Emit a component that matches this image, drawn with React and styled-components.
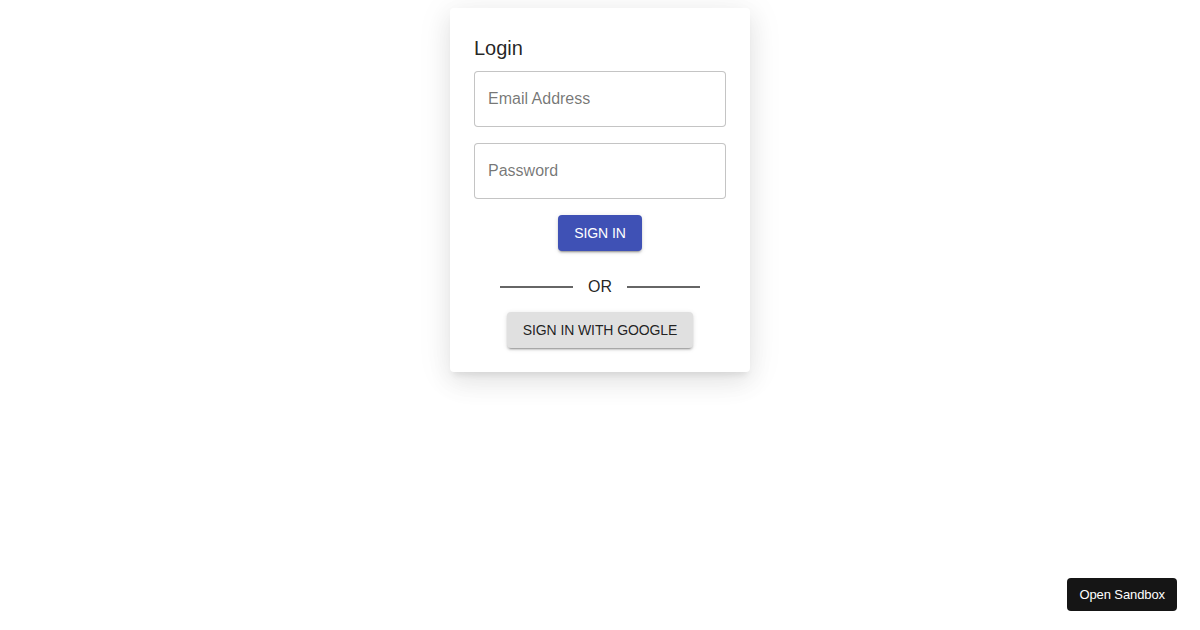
import React from "react";
import styled, { createGlobalStyle } from "styled-components";

const Global = createGlobalStyle`
  html, body { margin: 0; padding: 0; background: #fff; }
  body { font-family: "Liberation Sans", Arial, sans-serif; }
  * { box-sizing: border-box; }
`;

const Page = styled.div`
  width: 1200px;
  height: 630px;
  display: flex;
  justify-content: center;
  align-items: flex-start;
  padding-top: 8px;
  position: relative;
`;

const Card = styled.div`
  width: 300px;
  background: #fff;
  border-radius: 4px;
  padding: 24px;
  box-shadow: 0px 6px 6px -3px rgba(0,0,0,0.08), 0px 10px 24px 1px rgba(0,0,0,0.07), 0px 4px 36px 3px rgba(0,0,0,0.06);
  display: flex;
  flex-direction: column;
`;

const Title = styled.h2`
  margin: 0 0 7px;
  font-size: 20px;
  line-height: 32px;
  font-weight: 400;
  color: rgba(0,0,0,0.87);
`;

const Input = styled.input`
  width: 100%;
  height: 56px;
  border: 1px solid rgba(0,0,0,0.23);
  border-radius: 4px;
  padding: 0 13px;
  font-family: inherit;
  font-size: 16px;
  color: rgba(0,0,0,0.87);
  margin-bottom: 16px;
  outline: none;
  &::placeholder { color: rgba(0,0,0,0.55); }
`;

const Button = styled.button`
  align-self: center;
  height: 36px;
  padding: 0 16px;
  border: none;
  border-radius: 4px;
  font-family: inherit;
  font-size: 14px;
  letter-spacing: -0.1px;
  text-transform: uppercase;
  cursor: pointer;
  background: ${p => (p.$primary ? "#3f51b5" : "#e0e0e0")};
  color: ${p => (p.$primary ? "#fff" : "rgba(0,0,0,0.87)")};
  box-shadow: 0px 3px 1px -2px rgba(0,0,0,0.2), 0px 2px 2px 0px rgba(0,0,0,0.14), 0px 1px 5px 0px rgba(0,0,0,0.12);
`;

const Divider = styled.div`
  display: flex;
  align-items: center;
  justify-content: center;
  gap: 15px;
  margin: 24px 0 13px;
  height: 24px;
  font-size: 16px;
  color: rgba(0,0,0,0.87);
`;

const Line = styled.span`
  width: 73px;
  height: 2px;
  background: #666;
`;

const SandboxButton = styled.button`
  position: absolute;
  right: 23px;
  bottom: 19px;
  height: 33px;
  padding: 0 12px;
  background: #151515;
  color: #fff;
  border: none;
  border-radius: 4px;
  font-family: inherit;
  font-size: 13px;
  letter-spacing: -0.1px;
`;

export default function App() {
  return (
    <>
      <Global />
      <Page>
        <Card>
          <Title>Login</Title>
          <Input placeholder="Email Address" />
          <Input placeholder="Password" type="password" />
          <Button $primary>Sign In</Button>
          <Divider>
            <Line />
            OR
            <Line />
          </Divider>
          <Button>Sign in with Google</Button>
        </Card>
        <SandboxButton>Open Sandbox</SandboxButton>
      </Page>
    </>
  );
}
